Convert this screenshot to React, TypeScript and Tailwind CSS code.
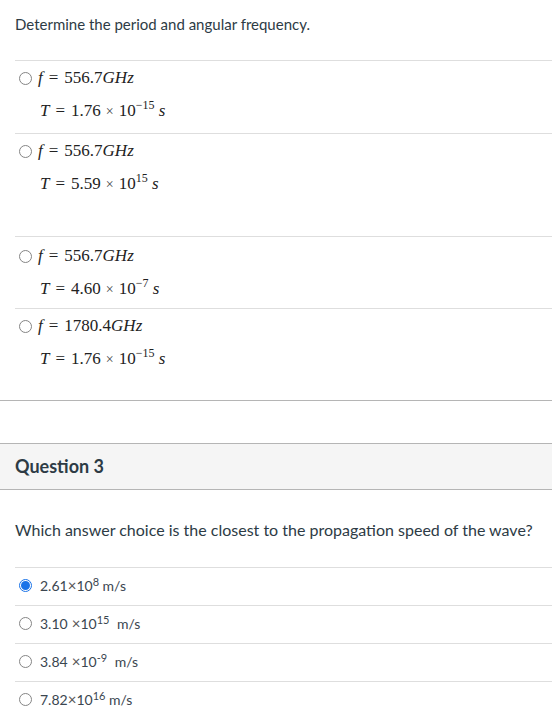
import React from 'react';

const lato = { fontFamily: 'Lato, "Noto Sans", sans-serif' };

const Radio: React.FC<{ checked?: boolean }> = ({ checked }) =>
  checked ? (
    <span className="inline-flex h-[13px] w-[13px] shrink-0 items-center justify-center rounded-full border border-[#1a73e8] bg-white">
      <span className="h-[9px] w-[9px] rounded-full bg-[#1a73e8]" />
    </span>
  ) : (
    <span className="inline-block h-[13px] w-[13px] shrink-0 rounded-full border border-[#858585] bg-white" />
  );

const M: React.FC<{ children: React.ReactNode; i?: boolean }> = ({ children, i }) => (
  <span className={i ? 'italic' : ''}>{children}</span>
);

interface MathOption {
  freq: string;
  mant: string;
  exp: string;
  pt: string;
  pb: string;
}

const mathOptions: MathOption[] = [
  { freq: '556.7', mant: '1.76', exp: '−15', pt: 'pt-[7px]', pb: 'pb-[12px]' },
  { freq: '556.7', mant: '5.59', exp: '15', pt: 'pt-[7px]', pb: 'pb-[42px]' },
  { freq: '556.7', mant: '4.60', exp: '−7', pt: 'pt-[9px]', pb: 'pb-[9px]' },
  { freq: '1780.4', mant: '1.76', exp: '−15', pt: 'pt-[7px]', pb: 'pb-[31px]' },
];

const speedOptions = [
  { mant: '2.61', gap: false, exp: '8', checked: true, sp: '' },
  { mant: '3.10', gap: true, exp: '15', checked: false, sp: 'ml-[4px]' },
  { mant: '3.84', gap: true, exp: '-9', checked: false, sp: 'ml-[4px]' },
  { mant: '7.82', gap: false, exp: '16', checked: false, sp: '' },
];

export default function App() {
  return (
    <div className="min-h-[727px] w-[552px] bg-white text-[#2d3b45]" style={lato}>
      <div className="pl-[15px]">
        <p className="pt-[14px] text-[15px] leading-[20px]">Determine the period and angular frequency.</p>
        <div className="mt-[26px]">
          {mathOptions.map((o, idx) => (
            <div
              key={idx}
              className={`border-t border-[#dedede] ${o.pt} ${o.pb} text-[17px] text-[#222]`}
              style={{ fontFamily: '"Liberation Serif", "DejaVu Serif", serif' }}
            >
              <div className="flex h-[20px] items-center gap-[6px] pl-[4px]">
                <Radio />
                <span className="whitespace-nowrap">
                  <M i>f</M>
                  <span className="mx-[6px]">=</span>
                  {o.freq}
                  <M i>GHz</M>
                </span>
              </div>
              <div className="mt-[13px] flex h-[20px] items-center pl-[25px]">
                <span className="whitespace-nowrap">
                  <M i>T</M>
                  <span className="mx-[6px]">=</span>
                  {o.mant}
                  <span className="mx-[5px] text-[14px] text-[#444]">×</span>
                  10
                  <sup className="top-[-0.6em] text-[12px]">{o.exp}</sup>
                  <M i> s</M>
                </span>
              </div>
            </div>
          ))}
        </div>
      </div>
      <div className="border-t border-[#b5b5b5]" />
      <div className="mt-[42px] flex h-[47px] items-center border-y border-[#b5b5b5] bg-[#f5f5f5] pl-[15px]">
        <h2 className="text-[18px] font-bold text-[#2d3b45]">Question 3</h2>
      </div>
      <div className="pl-[15px]">
        <p className="pt-[30px] text-[16px] leading-[20px]">
          Which answer choice is the closest to the propagation speed of the wave?
        </p>
        <div className="mt-[27px]">
          {speedOptions.map((o, idx) => (
            <div key={idx} className="flex h-[38px] items-center gap-[8px] border-t border-[#dedede] pb-[2px] pl-[4px] text-[14px] text-[#3b4650]">
              <Radio checked={o.checked} />
              <span className="whitespace-nowrap">
                {o.mant}
                {o.gap && <span className="inline-block w-[4px]" />}
                <span className="text-[15px] text-[#555]">×</span>10
                <sup className="text-[11px]">{o.exp}</sup>
                <span className={o.sp}>{' '}</span>
                m/s
              </span>
            </div>
          ))}
        </div>
      </div>
    </div>
  );
}
